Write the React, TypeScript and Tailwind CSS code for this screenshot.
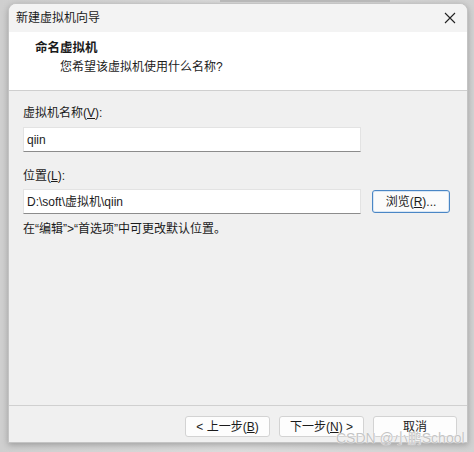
import React from "react";

const FONT = { fontFamily: '"Liberation Sans", "Noto Sans CJK SC", sans-serif' };

export default function App() {
  return (
    <div className="relative w-[474px] h-[452px] overflow-hidden bg-gradient-to-r from-[#cfcfcf] via-[#dcdcdc] to-[#d2d2d2] text-[#1b1b1b]" style={FONT}>
      <div className="absolute left-[220px] top-0 w-[170px] h-[2px] bg-[#b8b8b8]" />
      <div className="ml-[8px] pt-[3px]">
        <div className="w-[460px] h-[440px] flex flex-col rounded-t-[8px] border border-[#c4c4c4] bg-[#f0f0f0] overflow-hidden shadow-[0_2px_6px_rgba(0,0,0,0.25)]">
          {/* title bar */}
          <div className="h-[28px] shrink-0 flex items-center justify-between bg-[#f3f3f3] pl-[7px] pr-[10px]">
            <span className="text-[12px] leading-none">新建虚拟机向导</span>
            <svg width="12" height="12" viewBox="0 0 12 12" className="mr-[1px]">
              <path d="M1 1 L11 11 M11 1 L1 11" stroke="#222" strokeWidth="1.1" fill="none" />
            </svg>
          </div>
          {/* header */}
          <div className="h-[59px] shrink-0 bg-white border-b border-[#cfcfcf] pl-[26px] pt-[9px]">
            <div className="text-[12.5px] font-bold leading-[15px]">命名虚拟机</div>
            <div className="text-[12px] leading-[15px] pl-[25px] mt-[4px]">您希望该虚拟机使用什么名称?</div>
          </div>
          {/* body */}
          <div className="flex-1 pl-[14px] pt-[15px]">
            <div className="text-[12px] leading-[15px]">
              虚拟机名称(<span className="underline">V</span>):
            </div>
            <div className="mt-[6px] w-[338px] h-[25px] bg-white border border-[#e3e3e3] border-b-[#8c8c8c] flex items-center pl-[3px] text-[12px]">
              qiin
            </div>
            <div className="mt-[17px] text-[12px] leading-[15px]">
              位置(<span className="underline">L</span>):
            </div>
            <div className="mt-[5px] flex items-center">
              <div className="w-[338px] h-[25px] bg-white border border-[#e3e3e3] border-b-[#8c8c8c] flex items-center pl-[3px] text-[12px]">
                D:\soft\虚拟机\qiin
              </div>
              <button className="ml-[11px] w-[78px] h-[23px] rounded-[3px] border border-[#4a86c5] shadow-[inset_0_0_0_1px_#d8e6f4] bg-[#fbfbfb] text-[12px] flex items-center justify-center">
                浏览(<span className="underline">R</span>)...
              </button>
            </div>
            <div className="mt-[8px] text-[12px] leading-[15px]">在“编辑”&gt;“首选项”中可更改默认位置。</div>
          </div>
          {/* footer */}
          <div className="relative h-[37px] shrink-0 border-t border-[#d0d0d0] flex items-start pt-[10px] pl-[176px] gap-[9px]">
            <button className="w-[85px] h-[21px] rounded-[3px] border border-[#d3d3d3] bg-[#fdfdfd] text-[12px] flex items-center justify-center">
              &lt; 上一步(<span className="underline">B</span>)
            </button>
            <button className="w-[85px] h-[21px] rounded-[3px] border border-[#d3d3d3] bg-[#fdfdfd] text-[12px] flex items-center justify-center">
              下一步(<span className="underline">N</span>) &gt;
            </button>
            <button className="w-[84px] h-[21px] rounded-[3px] border border-[#d3d3d3] bg-[#fdfdfd] text-[12px] flex items-center justify-center">
              取消
            </button>
          </div>
        </div>
      </div>
      <div
        className="absolute left-[336px] top-[430px] whitespace-nowrap text-[14px] leading-[17px] text-[#c4c4c4]"
        style={{ textShadow: "0 0 1px #fff, 0 0 1px #fff" }}
      >
        CSDN @小鹏School
      </div>
    </div>
  );
}
